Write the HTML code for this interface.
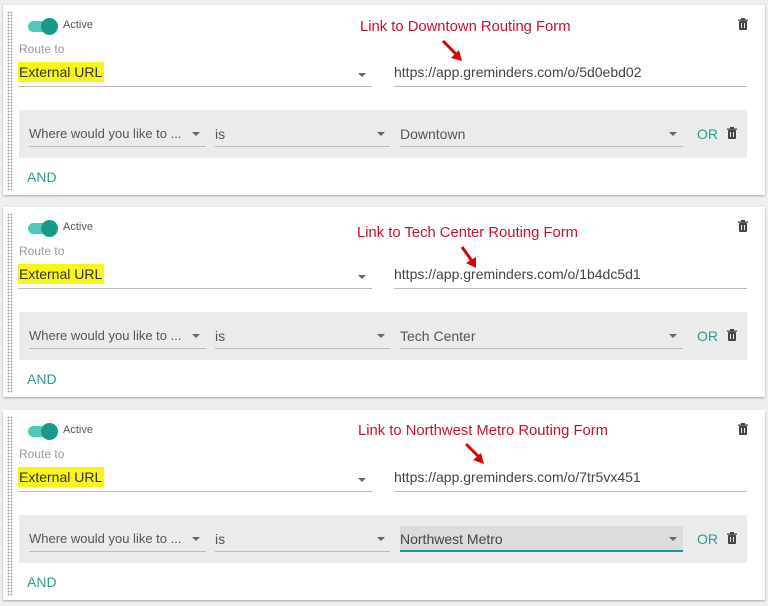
<!DOCTYPE html><html><head><style>
*{margin:0;padding:0;box-sizing:border-box}
body{width:768px;height:606px;background:#eef0f0;font-family:"Liberation Sans",sans-serif;position:relative;overflow:hidden}
.card{position:absolute;left:3px;width:762px;height:190px;background:#fff;box-shadow:0 1px 2px rgba(0,0,0,.3)}
.a{position:absolute}
.drag{left:4px;top:6px;width:6px;height:180px;background-image:radial-gradient(#aaa 0.8px,transparent 0.9px);background-size:3px 3px}
.tg{left:25px;top:13px;width:30px;height:16px}
.tg .t{position:absolute;left:0;top:3px;width:26px;height:11px;border-radius:6px;background:#4fc9b8}
.tg .k{position:absolute;left:13px;top:0;width:17px;height:17px;border-radius:50%;background:#179a8a}
.sm{font-size:11px;color:#555}
.lbl{font-size:12px;color:#999}
.txt{font-size:14px;color:#333}
.ul{height:1px;background:#bbb}
.arr{width:0;height:0;border-left:4px solid transparent;border-right:4px solid transparent;border-top:4px solid #666}
.box{left:16px;width:728px;height:48px;background:#ebebeb}
.or{font-size:14px;color:#2a9d8f}
.red{font-size:14.8px;color:#c8102e}
.w{font-size:13px}
</style></head><body>
<svg width="0" height="0" style="position:absolute"><defs><g id="tr"><rect x="1" y="3" width="8" height="9" rx="1" fill="#444"/><rect x="0" y="1.5" width="10" height="1.3" fill="#444"/><rect x="3" y="0" width="4" height="2" fill="#444"/><rect x="3" y="5" width="1" height="5" fill="#ebebeb"/><rect x="6" y="5" width="1" height="5" fill="#ebebeb"/></g></defs></svg>

<div class="card" style="top:5px">
<div class="a drag"></div>
<div class="a tg"><div class="t"></div><div class="k"></div></div>
<div class="a sm" style="left:60px;top:14px">Active</div>
<div class="a lbl" style="left:16px;top:37px">Route to</div>
<div class="a" style="left:15px;top:57px;width:86px;height:20px;background:#f7f51b"></div>
<div class="a txt" style="left:16px;top:59px">External URL</div>
<div class="a arr" style="left:355px;top:68px"></div>
<div class="a ul" style="left:15px;top:81px;width:354px"></div>
<div class="a txt" style="left:391px;top:59px;color:#444">https://app.greminders.com/o/5d0ebd02</div>
<div class="a ul" style="left:391px;top:81px;width:353px"></div>
<div class="a box" style="top:105px"></div>
<div class="a txt w" style="left:26px;top:121px;color:#555">Where would you like to ...</div>
<div class="a arr" style="left:189px;top:127px"></div>
<div class="a ul" style="left:26px;top:141px;width:177px"></div>
<div class="a txt" style="left:212px;top:121px;color:#555">is</div>
<div class="a arr" style="left:374px;top:127px"></div>
<div class="a ul" style="left:212px;top:141px;width:175px"></div>
<div class="a txt" style="left:397px;top:121px;color:#555">Downtown</div>
<div class="a arr" style="left:666px;top:127px"></div>
<div class="a ul" style="left:397px;top:141px;width:283px"></div>
<div class="a or" style="left:694px;top:121px">OR</div>
<svg class="a" style="left:724px;top:122px" width="10" height="12"><use href="#tr"/></svg>
<svg class="a" style="left:735px;top:13px" width="10" height="12"><use href="#tr"/></svg>
<div class="a or" style="left:24px;top:164px">AND</div>
<div class="a red" style="left:357px;top:14px">Link to Downtown Routing Form</div>
<svg class="a" style="left:436px;top:33px" width="30" height="30"><path d="M4 3 L18 17" stroke="#d00" stroke-width="3"/><path d="M12 20 L23 23 L20 12 Z" fill="#d00"/></svg>
</div>

<div class="card" style="top:207px">
<div class="a drag"></div>
<div class="a tg"><div class="t"></div><div class="k"></div></div>
<div class="a sm" style="left:60px;top:14px">Active</div>
<div class="a lbl" style="left:16px;top:37px">Route to</div>
<div class="a" style="left:15px;top:57px;width:86px;height:20px;background:#f7f51b"></div>
<div class="a txt" style="left:16px;top:59px">External URL</div>
<div class="a arr" style="left:355px;top:68px"></div>
<div class="a ul" style="left:15px;top:81px;width:354px"></div>
<div class="a txt" style="left:391px;top:59px;color:#444">https://app.greminders.com/o/1b4dc5d1</div>
<div class="a ul" style="left:391px;top:81px;width:353px"></div>
<div class="a box" style="top:105px"></div>
<div class="a txt w" style="left:26px;top:121px;color:#555">Where would you like to ...</div>
<div class="a arr" style="left:189px;top:127px"></div>
<div class="a ul" style="left:26px;top:141px;width:177px"></div>
<div class="a txt" style="left:212px;top:121px;color:#555">is</div>
<div class="a arr" style="left:374px;top:127px"></div>
<div class="a ul" style="left:212px;top:141px;width:175px"></div>
<div class="a txt" style="left:397px;top:121px;color:#555">Tech Center</div>
<div class="a arr" style="left:666px;top:127px"></div>
<div class="a ul" style="left:397px;top:141px;width:283px"></div>
<div class="a or" style="left:694px;top:121px">OR</div>
<svg class="a" style="left:724px;top:122px" width="10" height="12"><use href="#tr"/></svg>
<svg class="a" style="left:735px;top:13px" width="10" height="12"><use href="#tr"/></svg>
<div class="a or" style="left:24px;top:164px">AND</div>
<div class="a red" style="left:354px;top:18px">Link to Tech Center Routing Form</div>
<svg class="a" style="left:455px;top:37px" width="30" height="30"><path d="M4 3 L14 17" stroke="#d00" stroke-width="3"/><path d="M8 19 L18 24 L18 13 Z" fill="#d00"/></svg>
</div>

<div class="card" style="top:410px">
<div class="a drag"></div>
<div class="a tg"><div class="t"></div><div class="k"></div></div>
<div class="a sm" style="left:60px;top:14px">Active</div>
<div class="a lbl" style="left:16px;top:37px">Route to</div>
<div class="a" style="left:15px;top:57px;width:86px;height:20px;background:#f7f51b"></div>
<div class="a txt" style="left:16px;top:59px">External URL</div>
<div class="a arr" style="left:355px;top:68px"></div>
<div class="a ul" style="left:15px;top:81px;width:354px"></div>
<div class="a txt" style="left:391px;top:59px;color:#444">https://app.greminders.com/o/7tr5vx451</div>
<div class="a ul" style="left:391px;top:81px;width:353px"></div>
<div class="a box" style="top:105px"></div>
<div class="a txt w" style="left:26px;top:121px;color:#555">Where would you like to ...</div>
<div class="a arr" style="left:189px;top:127px"></div>
<div class="a ul" style="left:26px;top:141px;width:177px"></div>
<div class="a txt" style="left:212px;top:121px;color:#555">is</div>
<div class="a arr" style="left:374px;top:127px"></div>
<div class="a ul" style="left:212px;top:141px;width:175px"></div>
<div class="a" style="left:397px;top:116px;width:283px;height:25px;background:#dcdcdc"></div>
<div class="a txt" style="left:397px;top:121px;color:#444">Northwest Metro</div>
<div class="a arr" style="left:666px;top:127px"></div>
<div class="a" style="left:397px;top:140px;width:283px;height:2px;background:#1a9a8a"></div>
<div class="a or" style="left:694px;top:121px">OR</div>
<svg class="a" style="left:724px;top:122px" width="10" height="12"><use href="#tr"/></svg>
<svg class="a" style="left:735px;top:13px" width="10" height="12"><use href="#tr"/></svg>
<div class="a or" style="left:24px;top:164px">AND</div>
<div class="a red" style="left:355px;top:13px">Link to Northwest Metro Routing Form</div>
<svg class="a" style="left:459px;top:31px" width="30" height="30"><path d="M4 3 L17 16" stroke="#d00" stroke-width="3"/><path d="M11 19 L22 23 L19 12 Z" fill="#d00"/></svg>
</div>
</body></html>
